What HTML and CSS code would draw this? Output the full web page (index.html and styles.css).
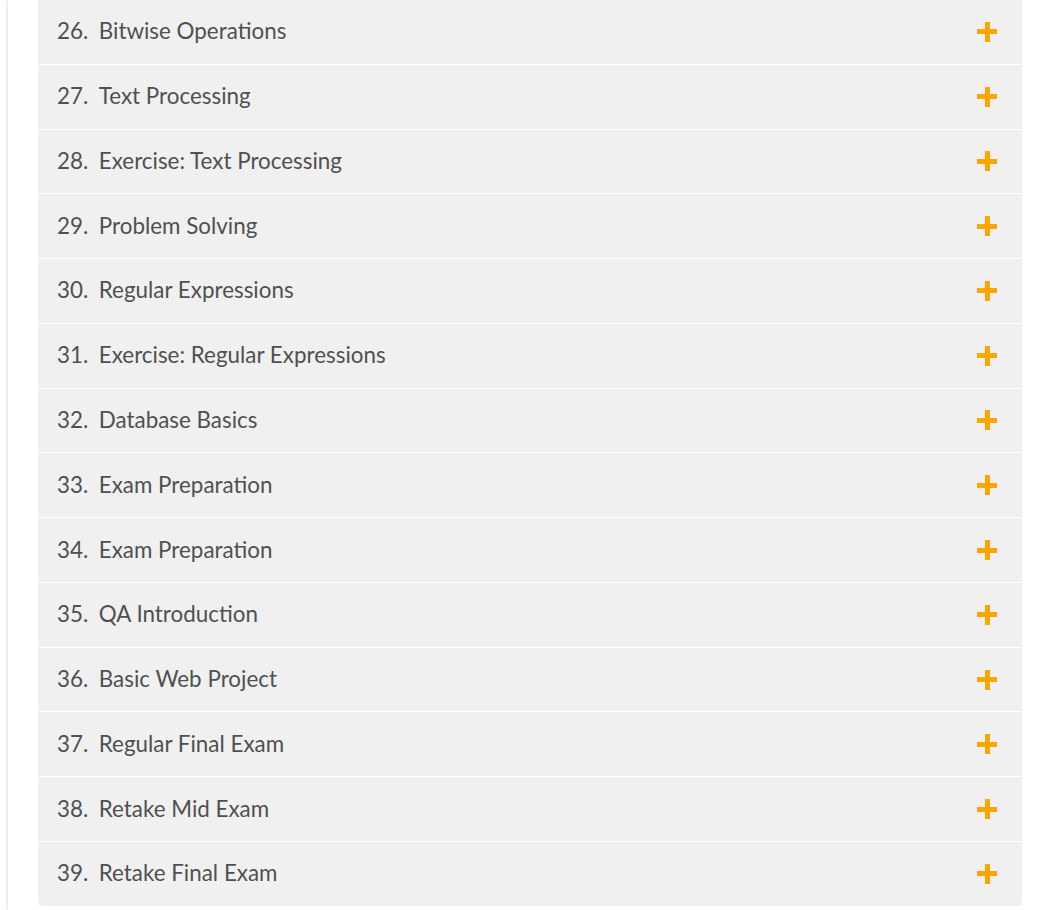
FILE: index.html
```html
<!DOCTYPE html>
<html lang="en">
<head>
    <meta charset="UTF-8">
    <meta name="viewport" content="width=device-width, initial-scale=1.0">
    <title>Course Lessons</title>
    <link rel="stylesheet" href="styles.css">
</head>
<body>
    <!-- Lessons list (continued) -->
    <section class="lessons">
        <div class="lesson"><span class="num">26.</span><span class="title">Bitwise Operations</span><span class="plus"></span></div>
        <div class="lesson"><span class="num">27.</span><span class="title">Text Processing</span><span class="plus"></span></div>
        <div class="lesson"><span class="num">28.</span><span class="title">Exercise: Text Processing</span><span class="plus"></span></div>
        <div class="lesson"><span class="num">29.</span><span class="title">Problem Solving</span><span class="plus"></span></div>
        <div class="lesson"><span class="num">30.</span><span class="title">Regular Expressions</span><span class="plus"></span></div>
        <div class="lesson"><span class="num">31.</span><span class="title">Exercise: Regular Expressions</span><span class="plus"></span></div>
        <div class="lesson"><span class="num">32.</span><span class="title">Database Basics</span><span class="plus"></span></div>
        <div class="lesson"><span class="num">33.</span><span class="title">Exam Preparation</span><span class="plus"></span></div>
        <div class="lesson"><span class="num">34.</span><span class="title">Exam Preparation</span><span class="plus"></span></div>
        <div class="lesson"><span class="num">35.</span><span class="title">QA Introduction</span><span class="plus"></span></div>
        <div class="lesson"><span class="num">36.</span><span class="title">Basic Web Project</span><span class="plus"></span></div>
        <div class="lesson"><span class="num">37.</span><span class="title">Regular Final Exam</span><span class="plus"></span></div>
        <div class="lesson"><span class="num">38.</span><span class="title">Retake Mid Exam</span><span class="plus"></span></div>
        <div class="lesson"><span class="num">39.</span><span class="title">Retake Final Exam</span><span class="plus"></span></div>
    </section>
</body>
</html>
```
FILE: styles.css
```css
body {
    font-family: Lato, "Open Sans", sans-serif;
    margin: 0;
    padding: 0;
    background-color: white;
}

.lessons {
    margin-left: 8px;
    padding: 0 25px 0 30px;
    min-height: 910px;
    box-sizing: border-box;
    box-shadow: -1px 0 3px rgba(0, 0, 0, 0.12);
}

.lesson {
    display: flex;
    align-items: center;
    height: 63.77px;
    margin-bottom: 1px;
    padding: 0 25px 0 19px;
    background-color: #f0f0f0;
    color: #505050;
    font-size: 22.4px;
}

.lesson:last-child {
    border-radius: 0 0 4px 4px;
}

.lesson .num {
    margin-right: 10.5px;
    padding-bottom: 2px;
}

.lesson .title {
    flex: 1;
    padding-bottom: 2px;
}

.plus {
    position: relative;
    width: 20px;
    height: 20px;
}

.plus::before, .plus::after {
    content: "";
    position: absolute;
    background-color: #ffa500;
}

.plus::before {
    left: 7.5px;
    top: 0;
    width: 5px;
    height: 20px;
}

.plus::after {
    left: 0;
    top: 7.5px;
    width: 20px;
    height: 5px;
}
```
